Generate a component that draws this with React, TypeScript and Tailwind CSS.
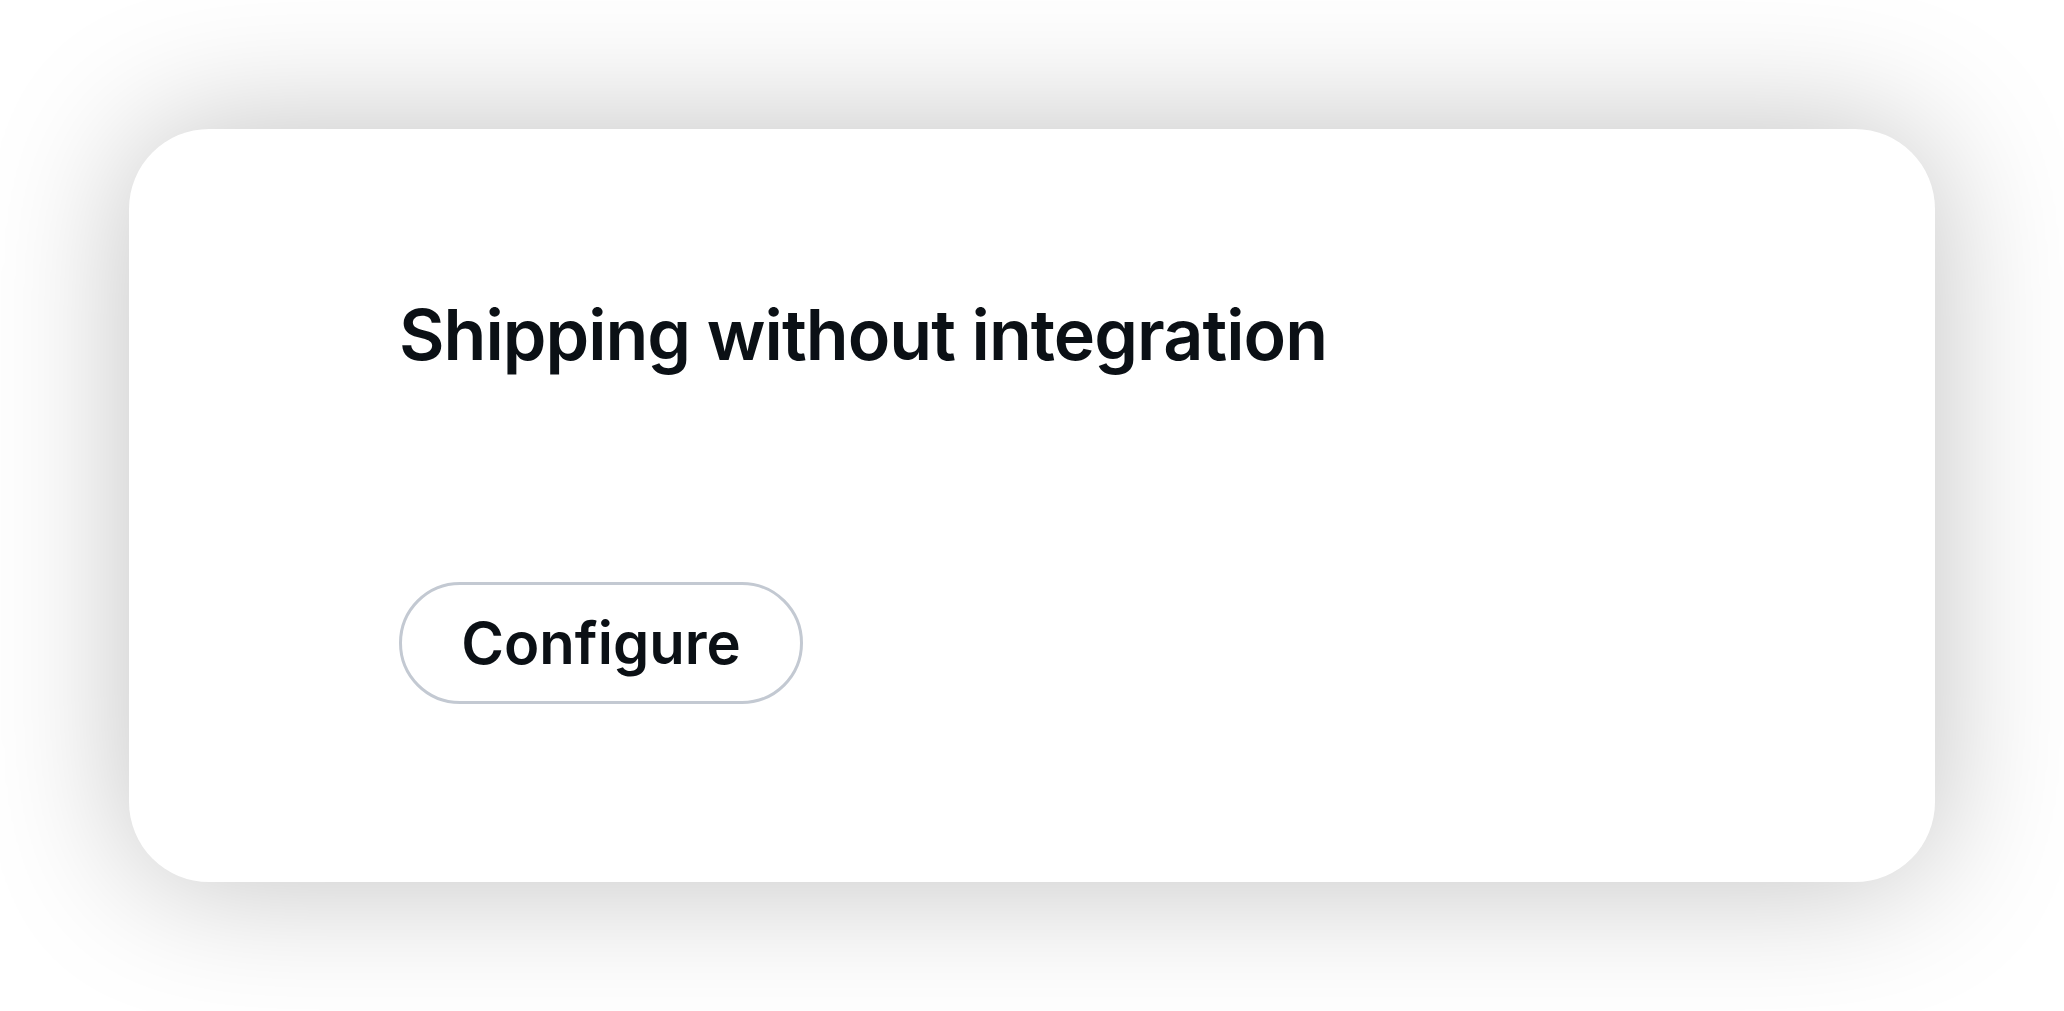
const App = () => {
  return (
    <div className="w-full h-screen bg-white p-[129px] font-['Inter','Liberation_Sans',sans-serif]">
      <div className="h-full w-full rounded-[80px] bg-white shadow-[0_0_140px_rgba(0,0,0,0.25)] pl-[270px] pt-[171px] flex flex-col items-start">
        <h2 className="text-[70px] leading-none font-semibold text-[#0b1015] tracking-[-0.014em]">
          Shipping without integration
        </h2>
        <button className="mt-[212px] h-[122px] w-[404px] rounded-full border-[3px] border-[#c3c9d2] bg-white text-[58px] leading-none font-semibold text-[#0b1015]">
          Configure
        </button>
      </div>
    </div>
  );
};

export default App;
